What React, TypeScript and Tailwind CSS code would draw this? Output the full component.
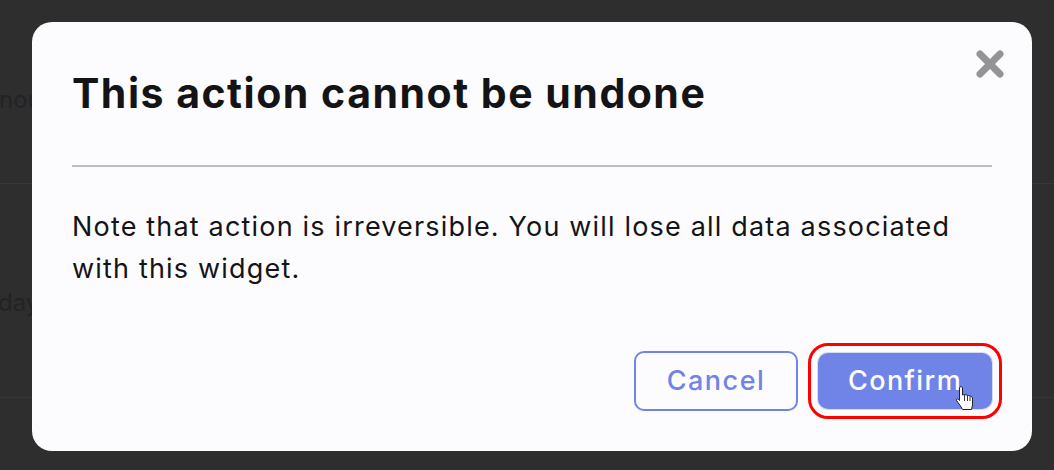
export default function App() {
  return (
    <div className="relative w-[1054px] h-[470px] overflow-hidden bg-[#2e2e2e] font-['Inter','Noto_Sans',sans-serif]">
      <div className="flex flex-col">
        <div className="h-[184px] border-b border-[#363636] flex items-center">
          <span className="text-[24px] text-[#232327] -ml-[1px] mt-[16px]">nou</span>
        </div>
        <div className="h-[214px] border-b border-[#363636] flex items-center">
          <span className="text-[24px] text-[#232327] -ml-[2px] mt-[24px]">day</span>
        </div>
      </div>

      <div className="absolute left-[32px] top-[22px] w-[1000px] h-[429px] bg-[#fcfcff] rounded-[20px] pl-[40px] pr-[40px] flex flex-col">
        <h1 className="h-[145px] border-b-2 border-[#bdbdbd] pt-[42px] text-[41px] leading-[58px] font-bold text-[#141416] tracking-[1.5px]">
          This action cannot be undone
        </h1>
        <p className="mt-[39px] text-[27px] leading-[42px] text-[#141416] tracking-[1.18px]">
          Note that action is irreversible. You will lose all data associated with this widget.
        </p>
        <div className="mt-auto mb-[40px] flex justify-end gap-[20px]">
          <button className="w-[164px] h-[60px] rounded-[10px] border-2 border-[#6f84e6] text-[27px] font-medium text-[#6f84e6] tracking-[1.5px]">
            Cancel
          </button>
          <div className="relative w-[174px] h-[56px] mt-[2px] rounded-[10px] bg-[#6f84e6] text-[27px] font-medium text-white tracking-[1.4px] flex items-center justify-center outline-[3px] outline-[#ff0000] outline-offset-[7px] shadow-[0_0_0_1px_#d5dcf8]">
            Confirm
          </div>
        </div>
        <svg className="absolute right-[27px] top-[27px] w-[30px] h-[30px]" viewBox="0 0 30 30">
          <path d="M5 5 L25 25 M25 5 L5 25" stroke="#949494" strokeWidth="7" strokeLinecap="round" fill="none" />
        </svg>
      </div>

      <svg className="absolute left-[955px] top-[386px] w-[20px] h-[26px]" viewBox="0 0 20 26">
        <path d="M4.5 1.5 C4.5 0.5 7.5 0.5 7.5 1.5 L7.5 9 L9.5 8.5 L11.5 9 L13.5 9.5 L16.5 10.5 L17.5 12 L17.5 19 L16.5 23.5 L7.5 23.5 L5.5 20 L1.5 14.5 C1 13 2.5 12 4.5 14.5 Z" fill="#ffffff" stroke="#222222" strokeWidth="1" />
        <path d="M9.5 9 V15 M12.5 9.5 V15 M15 10.5 V15" stroke="#333333" strokeWidth="1" fill="none" />
      </svg>
    </div>
  );
}
